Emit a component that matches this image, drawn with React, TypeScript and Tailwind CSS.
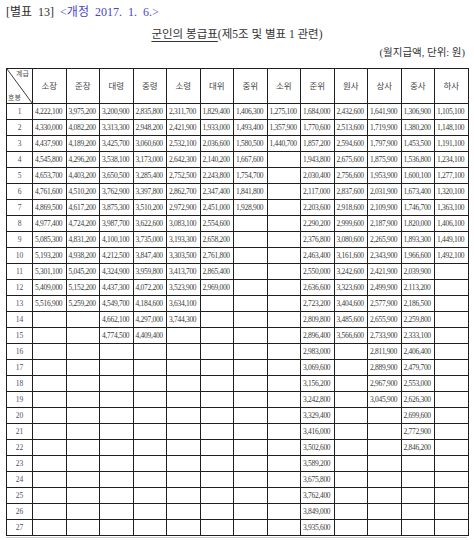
import React from "react";

const ranks = ["소장", "준장", "대령", "중령", "소령", "대위", "중위", "소위", "준위", "원사", "상사", "중사", "하사"];

// one line per 호봉, columns in the order of ranks
const pay: string[][] = [
  ["4,222,100", "3,975,200", "3,200,900", "2,835,800", "2,311,700", "1,829,400", "1,406,300", "1,275,100", "1,684,000", "2,432,600", "1,641,900", "1,306,900", "1,105,100"],
  ["4,330,000", "4,082,200", "3,313,300", "2,948,200", "2,421,900", "1,933,000", "1,493,400", "1,357,900", "1,770,600", "2,513,600", "1,719,900", "1,380,200", "1,148,100"],
  ["4,437,900", "4,189,200", "3,425,700", "3,060,600", "2,532,100", "2,036,600", "1,580,500", "1,440,700", "1,857,200", "2,594,600", "1,797,900", "1,453,500", "1,191,100"],
  ["4,545,800", "4,296,200", "3,538,100", "3,173,000", "2,642,300", "2,140,200", "1,667,600", "", "1,943,800", "2,675,600", "1,875,900", "1,536,800", "1,234,100"],
  ["4,653,700", "4,403,200", "3,650,500", "3,285,400", "2,752,500", "2,243,800", "1,754,700", "", "2,030,400", "2,756,600", "1,953,900", "1,600,100", "1,277,100"],
  ["4,761,600", "4,510,200", "3,762,900", "3,397,800", "2,862,700", "2,347,400", "1,841,800", "", "2,117,000", "2,837,600", "2,031,900", "1,673,400", "1,320,100"],
  ["4,869,500", "4,617,200", "3,875,300", "3,510,200", "2,972,900", "2,451,000", "1,928,900", "", "2,203,600", "2,918,600", "2,109,900", "1,746,700", "1,363,100"],
  ["4,977,400", "4,724,200", "3,987,700", "3,622,600", "3,083,100", "2,554,600", "", "", "2,290,200", "2,999,600", "2,187,900", "1,820,000", "1,406,100"],
  ["5,085,300", "4,831,200", "4,100,100", "3,735,000", "3,193,300", "2,658,200", "", "", "2,376,800", "3,080,600", "2,265,900", "1,893,300", "1,449,100"],
  ["5,193,200", "4,938,200", "4,212,500", "3,847,400", "3,303,500", "2,761,800", "", "", "2,463,400", "3,161,600", "2,343,900", "1,966,600", "1,492,100"],
  ["5,301,100", "5,045,200", "4,324,900", "3,959,800", "3,413,700", "2,865,400", "", "", "2,550,000", "3,242,600", "2,421,900", "2,039,900", ""],
  ["5,409,000", "5,152,200", "4,437,300", "4,072,200", "3,523,900", "2,969,000", "", "", "2,636,600", "3,323,600", "2,499,900", "2,113,200", ""],
  ["5,516,900", "5,259,200", "4,549,700", "4,184,600", "3,634,100", "", "", "", "2,723,200", "3,404,600", "2,577,900", "2,186,500", ""],
  ["", "", "4,662,100", "4,297,000", "3,744,300", "", "", "", "2,809,800", "3,485,600", "2,655,900", "2,259,800", ""],
  ["", "", "4,774,500", "4,409,400", "", "", "", "", "2,896,400", "3,566,600", "2,733,900", "2,333,100", ""],
  ["", "", "", "", "", "", "", "", "2,983,000", "", "2,811,900", "2,406,400", ""],
  ["", "", "", "", "", "", "", "", "3,069,600", "", "2,889,900", "2,479,700", ""],
  ["", "", "", "", "", "", "", "", "3,156,200", "", "2,967,900", "2,553,000", ""],
  ["", "", "", "", "", "", "", "", "3,242,800", "", "3,045,900", "2,626,300", ""],
  ["", "", "", "", "", "", "", "", "3,329,400", "", "", "2,699,600", ""],
  ["", "", "", "", "", "", "", "", "3,416,000", "", "", "2,772,900", ""],
  ["", "", "", "", "", "", "", "", "3,502,600", "", "", "2,846,200", ""],
  ["", "", "", "", "", "", "", "", "3,589,200", "", "", "", ""],
  ["", "", "", "", "", "", "", "", "3,675,800", "", "", "", ""],
  ["", "", "", "", "", "", "", "", "3,762,400", "", "", "", ""],
  ["", "", "", "", "", "", "", "", "3,849,000", "", "", "", ""],
  ["", "", "", "", "", "", "", "", "3,935,600", "", "", "", ""],
];

const serif = "font-['Liberation_Serif','Noto_Sans_CJK_KR',serif]";

function CornerCell() {
  return (
    <th className="relative h-[35px] border border-[#1f1f1f] p-0 font-normal">
      <svg className="absolute inset-0 h-full w-full" preserveAspectRatio="none" viewBox="0 0 26 35">
        <line x1="0" y1="0" x2="26" y2="35" stroke="#1f1f1f" strokeWidth="0.9" />
      </svg>
      <span className="absolute right-[3px] top-[1px] text-[7px] leading-[8px] text-[#555]">계급</span>
      <span className="absolute bottom-[1px] left-[1px] text-[7px] leading-[8px] text-[#555]">호봉</span>
    </th>
  );
}

export default function App() {
  return (
    <div className={`h-[540px] w-[474px] overflow-hidden bg-white pt-[4px] text-[#2e2e2e] ${serif}`}>
      <div className="px-[6px] text-[12px] leading-[16px] [word-spacing:3px]">
        [별표 13] <span className="text-[#4a44cf]">&lt;개정 2017. 1. 6.&gt;</span>
      </div>

      <div className="mt-[6px] text-center text-[11.5px] leading-[16px] text-[#333]">
        <span className="underline underline-offset-[3px]">군인의 봉급표</span>(제5조 및 별표 1 관련)
      </div>

      <div className="mt-[3px] pr-[9px] text-right text-[10.5px] leading-[16px] text-[#333]">(월지급액, 단위: 원)</div>

      <div className="ml-[6px] mt-[7px]">
        <table className="w-[461px] table-fixed border-collapse border border-[#1f1f1f]">
          <colgroup>
            <col className="w-[26px]" />
            {ranks.map((r) => (
              <col key={r} className="w-[33.5px]" />
            ))}
          </colgroup>
          <thead>
            <tr>
              <CornerCell />
              {ranks.map((r) => (
                <th key={r} className="border border-[#1f1f1f] p-0 text-center text-[8.5px] font-normal text-[#444]">
                  {r}
                </th>
              ))}
            </tr>
          </thead>
          <tbody>
            {pay.map((row, i) => (
              <tr key={i} className="h-[16px]">
                <td className="border border-[#1f1f1f] p-0 text-center text-[7.5px] leading-[15px] text-[#4a4f6a]">{i + 1}</td>
                {row.map((v, j) => (
                  <td
                    key={j}
                    className="overflow-hidden whitespace-nowrap border border-[#1f1f1f] p-0 pl-[2px] text-left text-[7.5px] leading-[15px] tracking-[-0.3px] text-[#3a3a3a]"
                  >
                    {v}
                  </td>
                ))}
              </tr>
            ))}
          </tbody>
        </table>
        <div className="mt-[1px] h-[1px] w-[461px] bg-[#c8c8c8]" />
      </div>
    </div>
  );
}
